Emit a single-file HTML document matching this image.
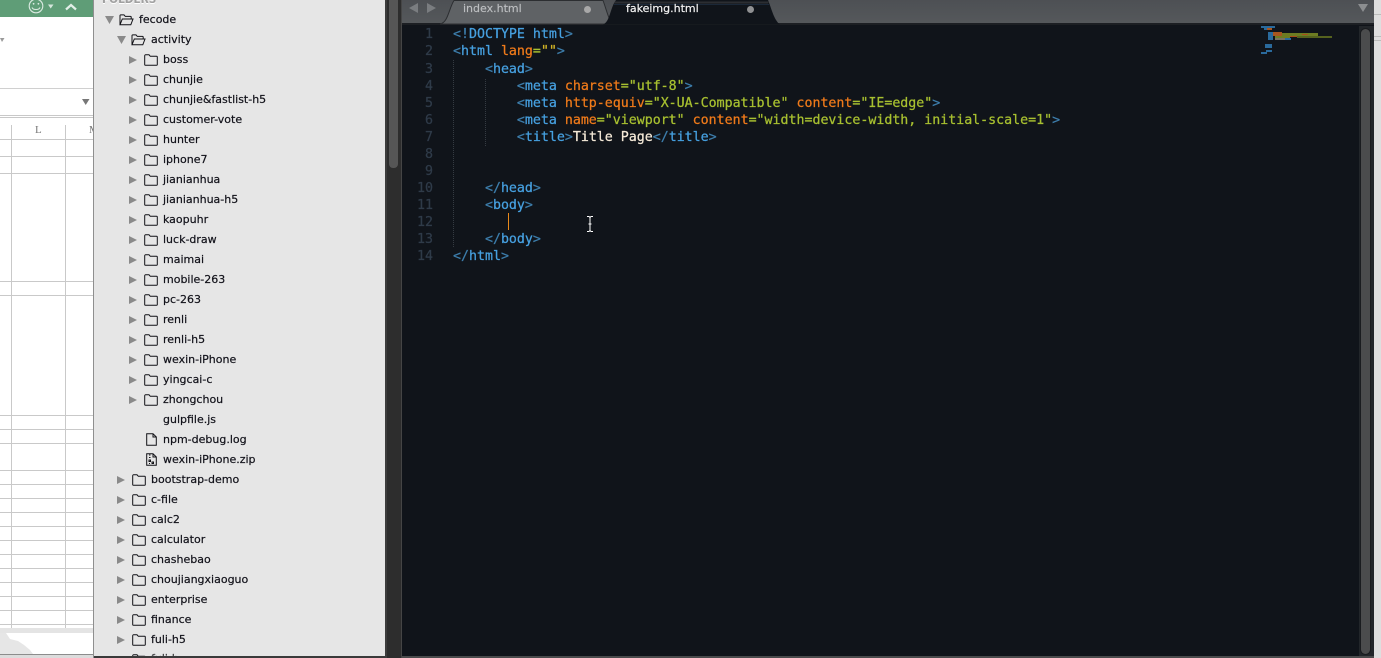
<!DOCTYPE html>
<html><head><meta charset="utf-8"><style>
html,body{margin:0;padding:0}
body{width:1381px;height:658px;overflow:hidden;position:relative;background:#fff;font-family:"DejaVu Sans",sans-serif}
div{position:absolute}
svg{position:absolute;overflow:visible}
.h{left:0;width:93px;height:1px;background:#c9c9c9}
.r{font:11px/20px "DejaVu Sans",sans-serif;color:#12121a;white-space:pre;height:20px;-webkit-text-stroke:.2px #12121a}
.l{left:402px;width:31px;text-align:right;font:13.28px/17px "DejaVu Sans Mono",monospace;color:#2f3b49;-webkit-text-stroke:.25px #2f3b49}
.c{left:453px;font:13.28px/17px "DejaVu Sans Mono",monospace;color:#46a0e0;white-space:pre;-webkit-text-stroke:.25px}
.p{color:#3d7eac}.a{color:#ef7a1a}.s{color:#a8c030}.e{color:#d6b827}.w{color:#f5ead8}
</style></head><body>
<svg width="0" height="0" style="position:absolute"><defs>
<symbol id="f" viewBox="0 0 14 12"><path d="M.7 2.7V10.6c0 .4.3.7.7.7H12.6c.4 0 .7-.3.7-.7V3c0-.4-.3-.7-.7-.7H6.3L5 .8H1.6c-.5 0-.9.4-.9.9z" fill="none" stroke="#111116" stroke-width="1"/></symbol>
<symbol id="o" viewBox="0 0 15 12"><path d="M1 10.8V1.6c0-.4.3-.7.7-.7H5l1.3 1.5h5.2c.4 0 .7.3.7.7V5M1 10.8L3.3 5H14l-2.2 5.8z" fill="none" stroke="#111116" stroke-width="1"/></symbol>
</defs></svg>

<!-- spreadsheet -->
<div style="left:0;top:0;width:93px;height:17px;background:#5f9d77"></div>
<svg style="left:28px;top:0" width="16" height="14"><circle cx="8" cy="6" r="6.8" fill="none" stroke="#dcebe2" stroke-width="1.1"/><circle cx="5.6" cy="3.8" r=".9" fill="#dcebe2"/><circle cx="10.4" cy="3.8" r=".9" fill="#dcebe2"/><path d="M4 7.4c1 2.8 7 2.8 8 0" fill="none" stroke="#dcebe2"/></svg>
<svg style="left:48px;top:3px" width="30" height="8"><path d="M0 1.5h5.5L2.7 5.5z" fill="#d5e6dc"/><path d="M18 6.5l5-4.5 5 4.5" fill="none" stroke="#e2efe8" stroke-width="2.2"/></svg>
<svg style="left:0;top:38px" width="5" height="5"><path d="M0 0h4.5L2 4z" fill="#9a9a9a"/></svg>
<div class="h" style="top:88px;background:#d0d0d0"></div>
<svg style="left:82px;top:99px" width="8" height="7"><path d="M0 0h7.5L3.7 6z" fill="#777"/></svg>
<div class="h" style="top:115px;background:#c8c8c8"></div>
<div class="h" style="top:117px;background:#c8c8c8"></div>
<div style="left:11px;top:125px;width:1px;height:503px;background:#c9c9c9"></div>
<div style="left:65px;top:125px;width:1px;height:503px;background:#c9c9c9"></div>
<div style="left:35px;top:123px;font:11px/14px 'Liberation Serif',serif;color:#777">L</div>
<div style="left:89px;top:123px;width:4px;overflow:hidden;font:11px/14px 'Liberation Serif',serif;color:#777">M</div>
<div class="h" style="top:139px"></div><div class="h" style="top:156px"></div><div class="h" style="top:173px"></div><div class="h" style="top:281px"></div><div class="h" style="top:295px"></div>
<div class="h" style="top:415px"></div><div class="h" style="top:429px"></div><div class="h" style="top:443px"></div><div class="h" style="top:470px"></div><div class="h" style="top:484px"></div><div class="h" style="top:498px"></div><div class="h" style="top:512px"></div><div class="h" style="top:526px"></div><div class="h" style="top:540px"></div><div class="h" style="top:554px"></div><div class="h" style="top:568px"></div><div class="h" style="top:582px"></div><div class="h" style="top:596px"></div><div class="h" style="top:610px"></div><div class="h" style="top:624px"></div>
<div style="left:0;top:628px;width:93px;height:5px;background:#e4e4e4"></div>
<svg style="left:0;top:633px" width="34" height="22"><path d="M0 0H6L10 6 18 8 24 12 30 17 33 21H0z" fill="#e6e6e6"/></svg>
<div style="left:0;top:654px;width:93px;height:1px;background:#8c8c8c"></div>
<div style="left:0;top:655px;width:93px;height:3px;background:#dcdcdc"></div>

<!-- sidebar -->
<div style="left:93px;top:0;width:1px;height:658px;background:#8f8f8f"></div>
<div style="left:94px;top:0;width:292px;height:656px;background:#e6e6e6"></div>
<div style="left:94px;top:656px;width:292px;height:2px;background:#3a3a3a"></div>
<div style="left:102px;top:-7px;font:bold 10.5px/14px 'DejaVu Sans',sans-serif;color:#a0a0a0;text-shadow:0 1px 0 #fff">FOLDERS</div>

<svg style="left:105px;top:16px" width="9" height="8"><path d="M0 0h9L4.5 8z" fill="#8a8a8a"/></svg>
<svg style="left:119px;top:14px" width="15" height="12"><use href="#o"/></svg><div class="r" style="left:139px;top:10px">fecode</div>
<svg style="left:117px;top:36px" width="9" height="8"><path d="M0 0h9L4.5 8z" fill="#8a8a8a"/></svg>
<svg style="left:131px;top:34px" width="15" height="12"><use href="#o"/></svg><div class="r" style="left:151px;top:30px">activity</div>

<svg style="left:129px;top:56px" width="8" height="8"><path d="M0 0l8 4-8 4z" fill="#8a8a8a"/></svg><svg style="left:144px;top:54px" width="14" height="12"><use href="#f"/></svg><div class="r" style="left:163px;top:50px">boss</div>
<svg style="left:129px;top:76px" width="8" height="8"><path d="M0 0l8 4-8 4z" fill="#8a8a8a"/></svg><svg style="left:144px;top:74px" width="14" height="12"><use href="#f"/></svg><div class="r" style="left:163px;top:70px">chunjie</div>
<svg style="left:129px;top:96px" width="8" height="8"><path d="M0 0l8 4-8 4z" fill="#8a8a8a"/></svg><svg style="left:144px;top:94px" width="14" height="12"><use href="#f"/></svg><div class="r" style="left:163px;top:90px">chunjie&amp;fastlist-h5</div>
<svg style="left:129px;top:116px" width="8" height="8"><path d="M0 0l8 4-8 4z" fill="#8a8a8a"/></svg><svg style="left:144px;top:114px" width="14" height="12"><use href="#f"/></svg><div class="r" style="left:163px;top:110px">customer-vote</div>
<svg style="left:129px;top:136px" width="8" height="8"><path d="M0 0l8 4-8 4z" fill="#8a8a8a"/></svg><svg style="left:144px;top:134px" width="14" height="12"><use href="#f"/></svg><div class="r" style="left:163px;top:130px">hunter</div>
<svg style="left:129px;top:156px" width="8" height="8"><path d="M0 0l8 4-8 4z" fill="#8a8a8a"/></svg><svg style="left:144px;top:154px" width="14" height="12"><use href="#f"/></svg><div class="r" style="left:163px;top:150px">iphone7</div>
<svg style="left:129px;top:176px" width="8" height="8"><path d="M0 0l8 4-8 4z" fill="#8a8a8a"/></svg><svg style="left:144px;top:174px" width="14" height="12"><use href="#f"/></svg><div class="r" style="left:163px;top:170px">jianianhua</div>
<svg style="left:129px;top:196px" width="8" height="8"><path d="M0 0l8 4-8 4z" fill="#8a8a8a"/></svg><svg style="left:144px;top:194px" width="14" height="12"><use href="#f"/></svg><div class="r" style="left:163px;top:190px">jianianhua-h5</div>
<svg style="left:129px;top:216px" width="8" height="8"><path d="M0 0l8 4-8 4z" fill="#8a8a8a"/></svg><svg style="left:144px;top:214px" width="14" height="12"><use href="#f"/></svg><div class="r" style="left:163px;top:210px">kaopuhr</div>
<svg style="left:129px;top:236px" width="8" height="8"><path d="M0 0l8 4-8 4z" fill="#8a8a8a"/></svg><svg style="left:144px;top:234px" width="14" height="12"><use href="#f"/></svg><div class="r" style="left:163px;top:230px">luck-draw</div>
<svg style="left:129px;top:256px" width="8" height="8"><path d="M0 0l8 4-8 4z" fill="#8a8a8a"/></svg><svg style="left:144px;top:254px" width="14" height="12"><use href="#f"/></svg><div class="r" style="left:163px;top:250px">maimai</div>
<svg style="left:129px;top:276px" width="8" height="8"><path d="M0 0l8 4-8 4z" fill="#8a8a8a"/></svg><svg style="left:144px;top:274px" width="14" height="12"><use href="#f"/></svg><div class="r" style="left:163px;top:270px">mobile-263</div>
<svg style="left:129px;top:296px" width="8" height="8"><path d="M0 0l8 4-8 4z" fill="#8a8a8a"/></svg><svg style="left:144px;top:294px" width="14" height="12"><use href="#f"/></svg><div class="r" style="left:163px;top:290px">pc-263</div>
<svg style="left:129px;top:316px" width="8" height="8"><path d="M0 0l8 4-8 4z" fill="#8a8a8a"/></svg><svg style="left:144px;top:314px" width="14" height="12"><use href="#f"/></svg><div class="r" style="left:163px;top:310px">renli</div>
<svg style="left:129px;top:336px" width="8" height="8"><path d="M0 0l8 4-8 4z" fill="#8a8a8a"/></svg><svg style="left:144px;top:334px" width="14" height="12"><use href="#f"/></svg><div class="r" style="left:163px;top:330px">renli-h5</div>
<svg style="left:129px;top:356px" width="8" height="8"><path d="M0 0l8 4-8 4z" fill="#8a8a8a"/></svg><svg style="left:144px;top:354px" width="14" height="12"><use href="#f"/></svg><div class="r" style="left:163px;top:350px">wexin-iPhone</div>
<svg style="left:129px;top:376px" width="8" height="8"><path d="M0 0l8 4-8 4z" fill="#8a8a8a"/></svg><svg style="left:144px;top:374px" width="14" height="12"><use href="#f"/></svg><div class="r" style="left:163px;top:370px">yingcai-c</div>
<svg style="left:129px;top:396px" width="8" height="8"><path d="M0 0l8 4-8 4z" fill="#8a8a8a"/></svg><svg style="left:144px;top:394px" width="14" height="12"><use href="#f"/></svg><div class="r" style="left:163px;top:390px">zhongchou</div>
<div class="r" style="left:163px;top:410px">gulpfile.js</div>
<svg style="left:146px;top:433px" width="11" height="13"><path d="M.7.7H7L10.3 4V12.3H.7zM7 .7V4h3.3" fill="none" stroke="#111116"/></svg><div class="r" style="left:163px;top:430px">npm-debug.log</div>
<svg style="left:146px;top:453px" width="11" height="13"><path d="M.7.7H7L10.3 4V12.3H.7zM7 .7V4h3.3" fill="none" stroke="#111116"/><path d="M3 2h1.5M3 4.5h1.5M3 7h1.5v1.5H3zM6 9h1.5v1.5H6zM3 10.5h1" stroke="#111116" fill="none"/></svg><div class="r" style="left:163px;top:450px">wexin-iPhone.zip</div>

<svg style="left:117px;top:476px" width="8" height="8"><path d="M0 0l8 4-8 4z" fill="#8a8a8a"/></svg><svg style="left:132px;top:474px" width="14" height="12"><use href="#f"/></svg><div class="r" style="left:151px;top:470px">bootstrap-demo</div>
<svg style="left:117px;top:496px" width="8" height="8"><path d="M0 0l8 4-8 4z" fill="#8a8a8a"/></svg><svg style="left:132px;top:494px" width="14" height="12"><use href="#f"/></svg><div class="r" style="left:151px;top:490px">c-file</div>
<svg style="left:117px;top:516px" width="8" height="8"><path d="M0 0l8 4-8 4z" fill="#8a8a8a"/></svg><svg style="left:132px;top:514px" width="14" height="12"><use href="#f"/></svg><div class="r" style="left:151px;top:510px">calc2</div>
<svg style="left:117px;top:536px" width="8" height="8"><path d="M0 0l8 4-8 4z" fill="#8a8a8a"/></svg><svg style="left:132px;top:534px" width="14" height="12"><use href="#f"/></svg><div class="r" style="left:151px;top:530px">calculator</div>
<svg style="left:117px;top:556px" width="8" height="8"><path d="M0 0l8 4-8 4z" fill="#8a8a8a"/></svg><svg style="left:132px;top:554px" width="14" height="12"><use href="#f"/></svg><div class="r" style="left:151px;top:550px">chashebao</div>
<svg style="left:117px;top:576px" width="8" height="8"><path d="M0 0l8 4-8 4z" fill="#8a8a8a"/></svg><svg style="left:132px;top:574px" width="14" height="12"><use href="#f"/></svg><div class="r" style="left:151px;top:570px">choujiangxiaoguo</div>
<svg style="left:117px;top:596px" width="8" height="8"><path d="M0 0l8 4-8 4z" fill="#8a8a8a"/></svg><svg style="left:132px;top:594px" width="14" height="12"><use href="#f"/></svg><div class="r" style="left:151px;top:590px">enterprise</div>
<svg style="left:117px;top:616px" width="8" height="8"><path d="M0 0l8 4-8 4z" fill="#8a8a8a"/></svg><svg style="left:132px;top:614px" width="14" height="12"><use href="#f"/></svg><div class="r" style="left:151px;top:610px">finance</div>
<svg style="left:117px;top:636px" width="8" height="8"><path d="M0 0l8 4-8 4z" fill="#8a8a8a"/></svg><svg style="left:132px;top:634px" width="14" height="12"><use href="#f"/></svg><div class="r" style="left:151px;top:630px">fuli-h5</div>
<div style="left:94px;top:653px;width:292px;height:3px;overflow:hidden"><div class="r" style="left:57px;top:-4px;color:#555">fuli-h</div><svg style="left:38px;top:1px" width="14" height="12"><use href="#f"/></svg></div>

<!-- divider & sidebar scrollbar -->
<div style="left:385px;top:0;width:17px;height:658px;background:#2d2d2d"></div>
<div style="left:385px;top:0;width:2px;height:658px;background:#3c3c3c"></div>
<div style="left:389px;top:0;width:9px;height:168px;background:#565656;border-radius:0 0 4px 4px"></div>
<div style="left:401px;top:0;width:1px;height:658px;background:#454545"></div>

<!-- editor -->
<div style="left:402px;top:0;width:972px;height:658px;background:#10141a"></div>
<div style="left:402px;top:0;width:972px;height:23px;background:linear-gradient(#4d5054,#55585b)"></div>
<div style="left:402px;top:23px;width:972px;height:2px;background:#1c1f23"></div>
<svg style="left:409px;top:3px" width="28" height="11"><path d="M9 0v10L0 5z" fill="#7a7d80"/><path d="M18 0v10l9-5z" fill="#7a7d80"/></svg>

<!-- tabs -->
<svg style="left:436px;top:0" width="350" height="25">
<path d="M4 24C12 23 13 8 18 .5H167C170 8 172 18 176 24z" fill="#5f6265" stroke="#2c2e31" stroke-width="1"/>
<path d="M167 24.5C174 22 174 8 180 0H332C336 10 338 20 344 24.5z" fill="#10141a"/>
<path d="M179 1.5H333L332 3.5H178z" fill="#2c2e32"/>
<path d="M178 4.5H333" stroke="#1b2838" stroke-width="1"/>
</svg>
<div style="left:463px;top:2px;font:11px/14px 'DejaVu Sans',sans-serif;color:#bdbfc1;-webkit-text-stroke:.15px #bdbfc1">index.html</div>
<div style="left:584px;top:6px;width:7px;height:7px;border-radius:50%;background:#a8a8a8"></div>
<div style="left:626px;top:2px;font:11px/14px 'DejaVu Sans',sans-serif;color:#f2f2f2;-webkit-text-stroke:.2px #f2f2f2">fakeimg.html</div>
<div style="left:747px;top:6px;width:7px;height:7px;border-radius:50%;background:#8f9092"></div>
<svg style="left:1358px;top:4px" width="11" height="9"><path d="M0 0h10L5 8z" fill="#8c8e90"/></svg>

<!-- line numbers -->
<div class="l" style="top:26px">1</div><div class="l" style="top:43px">2</div><div class="l" style="top:61px">3</div><div class="l" style="top:78px">4</div><div class="l" style="top:95px">5</div><div class="l" style="top:112px">6</div><div class="l" style="top:129px">7</div><div class="l" style="top:146px">8</div><div class="l" style="top:163px">9</div><div class="l" style="top:180px">10</div><div class="l" style="top:197px">11</div><div class="l" style="top:214px">12</div><div class="l" style="top:231px">13</div><div class="l" style="top:248px">14</div>

<!-- indent guides -->
<div style="left:453px;top:60px;height:187px;border-left:1px dotted #353b42"></div>
<div style="left:485px;top:79px;height:67px;border-left:1px dotted #353b42"></div>

<!-- code -->
<div class="c" style="top:26px"><span class="p">&lt;!</span>DOCTYPE html<span class="p">&gt;</span></div>
<div class="c" style="top:43px"><span class="p">&lt;</span>html <span class="a">lang</span><span class="s">=</span><span class="e">""</span><span class="p">&gt;</span></div>
<div class="c" style="top:61px">    <span class="p">&lt;</span>head<span class="p">&gt;</span></div>
<div class="c" style="top:78px">        <span class="p">&lt;</span>meta <span class="a">charset</span><span class="s">="utf-8"</span><span class="p">&gt;</span></div>
<div class="c" style="top:95px">        <span class="p">&lt;</span>meta <span class="a">http-equiv</span><span class="s">="X-UA-Compatible"</span> <span class="a">content</span><span class="s">="IE=edge"</span><span class="p">&gt;</span></div>
<div class="c" style="top:112px">        <span class="p">&lt;</span>meta <span class="a">name</span><span class="s">="viewport"</span> <span class="a">content</span><span class="s">="width=device-width, initial-scale=1"</span><span class="p">&gt;</span></div>
<div class="c" style="top:129px">        <span class="p">&lt;</span>title<span class="p">&gt;</span><span class="w">Title Page</span><span class="p">&lt;/</span>title<span class="p">&gt;</span></div>
<div class="c" style="top:180px">    <span class="p">&lt;/</span>head<span class="p">&gt;</span></div>
<div class="c" style="top:197px">    <span class="p">&lt;</span>body<span class="p">&gt;</span></div>
<div class="c" style="top:231px">    <span class="p">&lt;/</span>body<span class="p">&gt;</span></div>
<div class="c" style="top:248px"><span class="p">&lt;/</span>html<span class="p">&gt;</span></div>

<!-- caret + ibeam -->
<div style="left:508px;top:213px;width:1px;height:17px;background:#e8891a"></div>
<svg style="left:586px;top:216px" width="8" height="16"><path d="M1 .5h2l1 1 1-1h2M4 1.5v13M1 15.5h2l1-1 1 1h2M2.5 8h3" fill="none" stroke="#fff" stroke-width="1"/></svg>

<!-- minimap -->
<svg style="left:1260px;top:24px" width="75" height="32">
<rect x="1" y="2" width="14" height="2" fill="#2a6a9c"/><rect x="4" y="4" width="8" height="2" fill="#2a6a9c"/><rect x="7" y="4" width="5" height="2" fill="#a8561f"/>
<rect x="8" y="8" width="5" height="8" fill="#2a6a9c"/>
<rect x="13" y="8" width="9" height="4" fill="#a8561f"/><rect x="22" y="9" width="36" height="3" fill="#6d7c22"/><rect x="42" y="10" width="6" height="1" fill="#a84e18"/>
<rect x="15" y="12" width="15" height="2" fill="#6d7c22"/><rect x="30" y="12" width="7" height="1" fill="#a84e18"/><rect x="37" y="12" width="35" height="2" fill="#55621e"/>
<rect x="15" y="14" width="10" height="2" fill="#77705f"/><rect x="25" y="14" width="6" height="2" fill="#2a6a9c"/>
<rect x="5" y="20" width="7" height="4" fill="#2a6a9c"/><rect x="6" y="26" width="6" height="2" fill="#2a6a9c"/><rect x="1" y="28" width="6" height="2" fill="#2a6a9c"/>
</svg>

<!-- right scrollbar -->
<div style="left:1359px;top:26px;width:15px;height:630px;background:#22262a"></div>
<div style="left:1361px;top:29px;width:9px;height:625px;background:#4b4c4d;border-radius:5px;box-shadow:0 0 0 1px #1a1c1f"></div>
<div style="left:402px;top:656px;width:972px;height:2px;background:#4a4b4c"></div>

<!-- right edge -->
<div style="left:1374px;top:0;width:7px;height:658px;background:#dedede"></div>
<div style="left:1374px;top:14px;width:7px;height:1px;background:#bbb"></div>
<div style="left:1374px;top:36px;width:7px;height:1px;background:#bbb"></div>
<div style="left:1374px;top:40px;width:7px;height:1px;background:#bbb"></div>
</body></html>
